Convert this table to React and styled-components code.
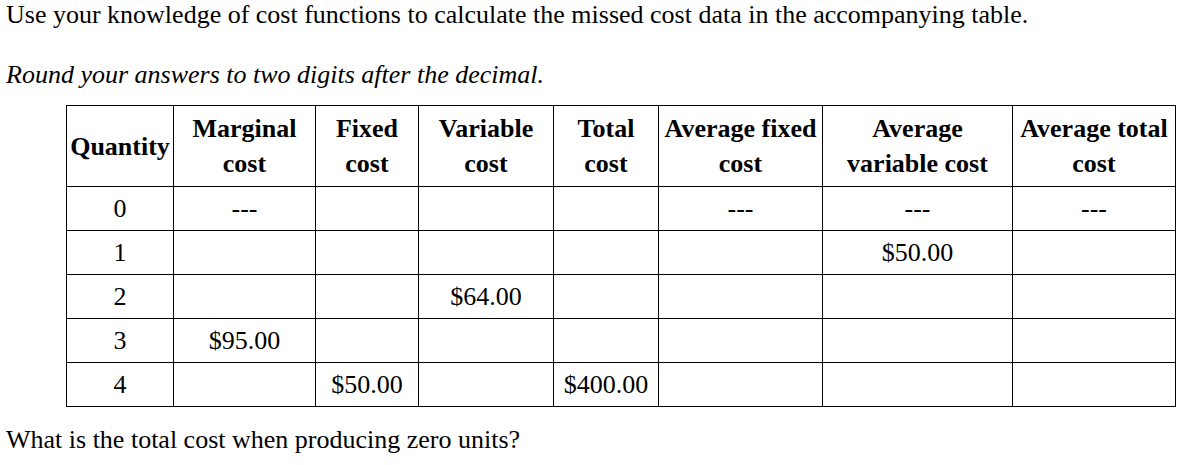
import styled, { createGlobalStyle } from "styled-components";

const GlobalStyle = createGlobalStyle`
  html, body {
    margin: 0;
    padding: 0;
    background: #ffffff;
  }
  body {
    font-family: "Liberation Serif", "Times New Roman", serif;
    color: #000000;
  }
`;

const columns = [
  { key: "q", width: 107, title: ["Quantity"] },
  { key: "mc", width: 142, title: ["Marginal", "cost"] },
  { key: "fc", width: 103, title: ["Fixed", "cost"] },
  { key: "vc", width: 135, title: ["Variable", "cost"] },
  { key: "tc", width: 105, title: ["Total", "cost"] },
  { key: "afc", width: 164, title: ["Average fixed", "cost"] },
  { key: "avc", width: 190, title: ["Average", "variable cost"] },
  { key: "atc", width: 163, title: ["Average total", "cost"] },
];

const rows = [
  ["0", "---", "", "", "", "---", "---", "---"],
  ["1", "", "", "", "", "", "$50.00", ""],
  ["2", "", "", "$64.00", "", "", "", ""],
  ["3", "$95.00", "", "", "", "", "", ""],
  ["4", "", "$50.00", "", "$400.00", "", "", ""],
];

export default function App() {
  return (
    <Page>
      <GlobalStyle />
      <Paragraph>
        Use your knowledge of cost functions to calculate the missed cost data
        in the accompanying table.
      </Paragraph>
      <Paragraph italic gap={30}>
        Round your answers to two digits after the decimal.
      </Paragraph>
      <CostTable>
        <colgroup>
          {columns.map((c) => (
            <col key={c.key} style={{ width: c.width }} />
          ))}
        </colgroup>
        <thead>
          <tr>
            {columns.map((c) => (
              <HeaderCell key={c.key}>
                {c.title.map((line, i) => (
                  <HeaderLine key={i}>{line}</HeaderLine>
                ))}
              </HeaderCell>
            ))}
          </tr>
        </thead>
        <tbody>
          {rows.map((row, r) => (
            <tr key={r}>
              {row.map((value, i) => (
                <Cell key={i}>{value}</Cell>
              ))}
            </tr>
          ))}
        </tbody>
      </CostTable>
      <Paragraph gap={18}>What is the total cost when producing zero units?</Paragraph>
    </Page>
  );
}

const Page = styled.div`
  width: 1183px;
  height: 465px;
  box-sizing: border-box;
  padding: 0 0 0 6px;
  overflow: hidden;
`;

const Paragraph = styled.p`
  margin: ${(p) => p.gap || 0}px 0 0 0;
  font-size: 26px;
  line-height: 30px;
  font-style: ${(p) => (p.italic ? "italic" : "normal")};
  white-space: nowrap;
`;

const CostTable = styled.table`
  margin: 15px 0 0 60px;
  width: 1110px;
  table-layout: fixed;
  border-collapse: collapse;
  font-size: 26px;
`;

const HeaderCell = styled.th`
  border: 1px solid #000000;
  padding: 5px 0;
  line-height: 35px;
  font-weight: bold;
  text-align: center;
  vertical-align: middle;
  white-space: nowrap;
`;

const HeaderLine = styled.span`
  display: block;
`;

const Cell = styled.td`
  border: 1px solid #000000;
  padding: 4px 0;
  height: 35px;
  line-height: 35px;
  text-align: center;
  vertical-align: middle;
  white-space: nowrap;
`;
